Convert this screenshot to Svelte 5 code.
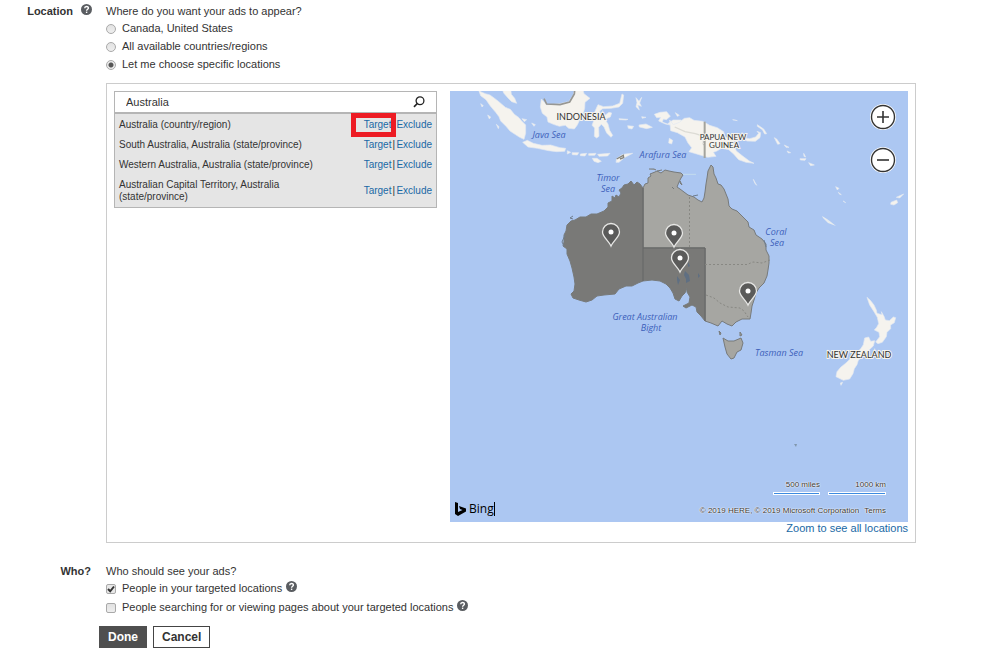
<script>
  let choice = $state('specific');
  let query = $state('Australia');
  let inLocations = $state(true);
  let searching = $state(false);

  const scopes = [
    { id: 'north-america', label: 'Canada, United States' },
    { id: 'all', label: 'All available countries/regions' },
    { id: 'specific', label: 'Let me choose specific locations' }
  ];

  const results = [
    { name: 'Australia (country/region)', marked: true },
    { name: 'South Australia, Australia (state/province)' },
    { name: 'Western Australia, Australia (state/province)' },
    { name: 'Australian Capital Territory, Australia (state/province)' }
  ];

  const pins = [
    [611, 246],
    [674, 247],
    [680, 272],
    [748, 305]
  ];

  const seas = [
    { x: 549, y: 138, text: 'Java Sea' },
    { x: 663, y: 158, text: 'Arafura Sea' },
    { x: 608, y: 181, text: 'Timor' },
    { x: 608, y: 192, text: 'Sea' },
    { x: 776, y: 235, text: 'Coral' },
    { x: 777, y: 246, text: 'Sea' },
    { x: 645, y: 320, text: 'Great Australian' },
    { x: 651, y: 331, text: 'Bight' },
    { x: 779, y: 356, text: 'Tasman Sea' }
  ];
</script>

{#snippet help()}
  <button class="help" type="button" aria-label="Help">
    <svg viewBox="0 0 11 11" width="11" height="11" aria-hidden="true">
      <circle cx="5.5" cy="5.5" r="5.5" fill="#5a5d61" />
      <path d="M3.7 4.3C3.7 1.9 7.4 1.9 7.4 4.1C7.4 5.3 5.6 5.3 5.6 6.8" fill="none" stroke="#fff" stroke-width="1.4" />
      <rect x="4.9" y="7.6" width="1.4" height="1.4" fill="#fff" />
    </svg>
  </button>
{/snippet}

<main>
  <section class="field">
    <div class="name"><h2>Location</h2>{@render help()}</div>
    <div class="body">
      <fieldset>
        <legend>Where do you want your ads to appear?</legend>
        {#each scopes as s}
          <label class="option">
            <input type="radio" name="scope" value={s.id} bind:group={choice} />
            <span>{s.label}</span>
          </label>
        {/each}
      </fieldset>

      <div class="panel">
        <div class="finder">
          <div class="search">
            <input type="text" aria-label="Search locations" bind:value={query} />
            <button type="button" aria-label="Search">
              <svg viewBox="0 0 12 12" width="12" height="12" aria-hidden="true">
                <circle cx="7" cy="4.700" r="3.900" fill="none" stroke="#222" stroke-width="1.3" />
                <path d="M4.3 7.5L1 10.800" stroke="#222" stroke-width="1.7" />
              </svg>
            </button>
          </div>
          <ul>
            {#each results as r}
              <li>
                <span class="place">{r.name}</span>
                <span class="actions">
                  <a href="#target" class:marked={r.marked}>Target</a><i>|</i><a href="#exclude">Exclude</a>
                </span>
              </li>
            {/each}
          </ul>
        </div>

        <div class="mapcol">
          <div class="map">
            <svg class="chart" viewBox="450 91 458 431" role="img" aria-label="Map of Australia">
              <rect x="450" y="91" width="458" height="431" fill="#acc7f2" />

              <!-- Indonesia -->
              <g transform="translate(450 85) scale(.33333)" fill="#f5f3ee" stroke="#e3e9f2" stroke-width="2">
                <path d="M84 10L92 20L106 26L120 30L139 44L150 53L166 67L181 73L193 88L207 98L215 108L227 120L227 145L222 163L209 157L195 148L180 138L168 124L152 108L147 95L137 82L121 63L108 44L92 32Z" />
                <path d="M156 10L161 24L174 39L185 50L200 55L194 40L184 28L182 10Z" />
                <path d="M274 42L282 50L290 60L330 56L356 50L370 30L374 10H398L402 26L420 40L405 52L404 70L399 88L390 103L382 120L373 132L356 130L346 121L328 124L310 118L294 111L291 96L277 85L271 66Z" />
                <path d="M218 172L232 166L250 175L276 181L302 180L330 188L347 190L344 199L320 200L296 197L262 190L234 186Z" />
                <path d="M352 197L362 202L352 207ZM366 203L386 203L382 210L367 209ZM391 207L410 205L405 213L391 212ZM416 206L438 205L434 211L416 211ZM443 208L480 205L473 213L447 214ZM427 220L441 220L454 229L444 233L432 229ZM500 221L515 210L526 207L548 205L523 218L507 232L498 232Z" />
                <path d="M439 70L444 59L461 65L488 63L509 55L516 27L521 30L518 55L507 66L483 70L458 71L449 78L452 91L459 95L477 82L485 84L481 96L465 103L474 117L479 136L488 151L483 157L470 144L462 126L454 118L446 127L447 154L440 159L433 154L434 129L426 121L432 105L438 94L433 83Z" />
                <path d="M558 38L567 49L575 37L569 54L574 64L563 60L568 75L558 65L561 53ZM575 95L588 97L577 100ZM507 101L534 103L528 105L508 104ZM533 122L551 124L546 132L535 130ZM567 120L588 117L607 127L590 131L568 126Z" />
                <path d="M613 88L630 82L650 80L661 94L649 104L640 102L637 111L652 117L669 105L694 105V145L668 130L665 121L646 117L626 108L632 97L620 98ZM658 160L668 166L665 177L656 174Z" />
                <path d="M92 56L100 62L96 66ZM113 90L122 96L118 102ZM139 118L147 125L145 131ZM216 101L230 104L223 110ZM245 114L256 119L252 124Z" />
                <path d="M282 41L290 57L330 59L359 51L373 27L374 17" fill="none" stroke="#979793" stroke-width="5" />
                <path d="M500 222L520 211L521 218L510 222" fill="none" stroke="#85857f" stroke-width="4" />
              </g>

              <!-- New Guinea and the Pacific islands -->
              <g transform="translate(670 85) scale(.33333)" fill="#f5f3ee" stroke="#e3e9f2" stroke-width="2">
                <path d="M-1 105L10 119L28 112L43 100L59 98L72 106L98 109L119 121L142 128L161 140L164 155L189 166L190 178L199 198L219 214L238 228L252 235L228 232L206 224L190 206L176 194L155 190L139 199L130 202L138 214L113 217L80 207L57 200L65 188L54 174L45 156L22 143L2 137Z" />
                <path d="M223 159L239 161L257 156L266 145L261 139L272 143L270 158L256 169L230 168ZM262 119L281 132L290 146L284 147L277 134L262 124Z" />
                <path d="M313 158L320 162L330 176L323 178ZM343 180L357 187L348 187ZM351 198L362 203L355 204ZM390 221L408 221L405 226L391 225ZM416 233L433 240L422 242ZM401 205L407 216L402 214ZM497 305L507 310L502 315ZM505 322L514 329L509 328ZM519 348L527 353ZM663 352L680 345L683 353L672 360L662 358ZM679 337L701 327L689 339ZM188 104L202 107ZM16 83L28 91L22 94ZM250 283L260 301L254 294Z" />
                <path d="M104 110V219" stroke="#a3a39d" stroke-width="6" />
                <path d="M14 126L45 140L76 146L98 153" fill="none" stroke="#dcdbd5" stroke-width="4" />
                <path d="M100 159V174M98 176L103 182" fill="none" stroke="#aaa" stroke-width="2" />
                <path d="M36 268H78" stroke="#c3dced" stroke-width="3" />
              </g>
              <path d="M822 216l5 3 4 3 5 4-8-3-5-5z" fill="#e7ecef" />
              <path d="M794 444h3l-1 3z" fill="#8196ac" />

              <!-- New Zealand -->
              <g transform="translate(780 280) scale(.33333)" fill="#f5f3ee" stroke="#e3e9f2" stroke-width="2">
                <path d="M261 52L271 61L282 75L289 90L291 100L306 104L304 95L312 109L316 120L328 122L340 111L347 113L343 128L332 135L332 146L321 157L319 170L307 187L294 191L287 186L299 170L297 157L283 150L290 142L296 131L292 112L282 95L269 75Z" />
                <path d="M254 174L266 171L272 184L284 182L280 198L268 209L253 225L235 241L231 254L223 266L219 281L209 297L190 301L168 290L171 275L182 262L198 249L210 237L225 224L243 205L250 194Z" />
                <path d="M181 309L188 307L183 316Z" />
              </g>

              <!-- Australian states -->
              <g stroke="#777a7b" stroke-width="1" stroke-linejoin="round">
                <path fill="#a6a6a2" d="M643 188L645 184L648 183L648 178L651 176L650 174L655 172L657 171L661 173L665 170L669 171L674 172L681 173L683 175L681 178L679 182L677 187L680 189L684 192L688 195L694 197L698 200L702 202L704 198L705 192L706 184L707 178L708 171L711 165L713 167L714 174L716 178L718 184L721 185L724 189L726 194L728 199L729 206L732 209L737 211L740 214L744 218L748 222L749 227L754 230L756 235L762 239L766 244L766 250L769 256L769 263L768 270L767 276L764 283L759 288L756 293L754 300L752 306L751 313L750 319L742 319L736 322L732 326L727 324L722 321L718 326L711 323L705 321V248H643Z" />
                <path fill="#797977" d="M643 188L640 184L637 182L634 185L631 181L628 184L624 185L622 188L619 190L621 193L619 197L616 195L615 198L612 196L612 201L608 203L608 207L604 211L597 214L591 214L586 217L580 217L575 220L571 221L567 225L566 231L564 235L564 242L563 246L567 249L567 254L570 261L572 268L574 277L575 284L574 291L571 294L573 298L579 300L586 302L592 300L597 296L604 295L615 294L619 289L626 286L632 286L638 283L643 281Z" />
                <path fill="#797977" d="M643 248H705V321L701 316L697 312L696 307L692 305L686 308L683 306L689 303L690 297L687 292L687 288L685 293L682 296L679 301L675 299L673 293L670 288L666 284L660 281L652 280L643 281Z" />
                <path fill="#a6a6a2" d="M723 338L728 341L734 341L741 338L743 343L741 350L737 352L734 358L731 359L727 354L725 347Z" />
                <path fill="#a6a6a2" d="M719 331l2 2-1 2zM740 332l2 3-2 1zM680 181l2 4-2-2zM657 171l5-1M649 169l5 0 2 1M672 187l2 2" />
              </g>
              <path d="M643 188V281M643 248H705V321" fill="none" stroke="#666664" />
              <g fill="none" stroke="#888883" stroke-dasharray="2 2">
                <path d="M689.5 197V248M705 264.500H747L753 262L762 263L770 260M706 295L714 298L720 303L728 307L740 308L744 311L748 317" />
              </g>
              <g fill="#5f6f82">
                <path d="M677 276l3 4-2 5-1-5zM685 271l4 4 1 6-4 2 0-4-2-4zM688 262l2 4-2 1zM698 273l2 3-2 2z" />
                <path d="M565 235l-3 7 2 4M573 219l-3-1 3-2M693 196l5-1M764 240l2 7" stroke="#6f7d8d" fill="none" />
              </g>

              <g class="country">
                <text x="581" y="120">INDONESIA</text>
                <text x="723" y="140" class="narrow">PAPUA NEW</text>
                <text x="724" y="148" class="narrow">GUINEA</text>
                <text x="859" y="358">NEW ZEALAND</text>
              </g>
              <g class="sea">
                {#each seas as s}<text x={s.x} y={s.y}>{s.text}</text>{/each}
              </g>

              {#each pins as [x, y]}
                <g transform="translate({x} {y})">
                  <path d="M0 0C-2-5-8.500-9-8.500-14A8.500 8.500 0 0 1 8.500-14C8.500-9 2-5 0 0Z" fill="#5b5b5a" stroke="#e8e8e6" stroke-width="1.300" />
                  <circle cy="-14" r="2.500" fill="#fff" />
                </g>
              {/each}
            </svg>

            <div class="zoom">
              <button type="button" aria-label="Zoom in">
                <svg viewBox="0 0 26 26" width="26" height="26" aria-hidden="true">
                  <circle cx="13" cy="13" r="11.500" fill="#fff" stroke="#333" stroke-width="1.400" />
                  <path d="M7 13H19M13 7V19" stroke="#333" stroke-width="1.600" />
                </svg>
              </button>
              <button type="button" aria-label="Zoom out">
                <svg viewBox="0 0 26 26" width="26" height="26" aria-hidden="true">
                  <circle cx="13" cy="13" r="11.500" fill="#fff" stroke="#333" stroke-width="1.400" />
                  <path d="M7 13H19" stroke="#333" stroke-width="1.600" />
                </svg>
              </button>
            </div>

            <div class="bing">
              <svg viewBox="0 0 11 14" width="11" height="14" aria-hidden="true">
                <path d="M0 0L3 1V10L7.500 8L5 7L4 4L11 6.500V9.500L3 14L0 12Z" fill="#000" />
              </svg>
              <span>Bing</span>
            </div>

            <div class="legal">
              <div class="scales">
                <span class="miles">500 miles</span>
                <span class="km">1000 km</span>
              </div>
              <div class="credits"><span>© 2019 HERE, © 2019 Microsoft Corporation</span><a href="#terms">Terms</a></div>
            </div>
          </div>
          <a class="all" href="#all">Zoom to see all locations</a>
        </div>
      </div>
    </div>
  </section>

  <section class="field who">
    <div class="name"><h2>Who?</h2></div>
    <div class="body">
      <fieldset>
        <legend>Who should see your ads?</legend>
        <div class="line">
          <label class="option"><input type="checkbox" bind:checked={inLocations} /><span>People in your targeted locations</span></label>
          {@render help()}
        </div>
        <div class="line">
          <label class="option"><input type="checkbox" bind:checked={searching} /><span>People searching for or viewing pages about your targeted locations</span></label>
          {@render help()}
        </div>
      </fieldset>
    </div>
  </section>

  <div class="buttons">
    <button type="button" class="done">Done</button>
    <button type="button">Cancel</button>
  </div>
</main>

<style>
  :global(body) {
    margin: 0;
    background: #fff;
  }
  main {
    padding: 2px 90px 9px 0;
    font: 11px/18px "Liberation Sans", Arial, sans-serif;
    color: #333;
  }
  button, input {
    font: inherit;
    color: inherit;
  }
  a {
    color: #1a69a6;
    text-decoration: none;
  }
  .field {
    display: grid;
    grid-template-columns: 92px minmax(0, 1fr);
    column-gap: 14px;
  }
  .name {
    display: flex;
    justify-content: flex-end;
    align-items: flex-start;
    gap: 8px;
  }
  h2 {
    margin: 0;
    font-size: 11px;
    font-weight: bold;
  }
  .help {
    display: block;
    padding: 0;
    border: 0;
    background: none;
  }
  .help svg {
    display: block;
  }
  .name .help {
    margin-top: 2px;
  }
  .who h2 {
    padding-right: 1px;
  }
  fieldset {
    margin: 0;
    padding: 0;
    border: 0;
    min-width: 0;
  }
  legend {
    padding: 0;
    height: 17px;
  }
  .option {
    display: flex;
    align-items: center;
    gap: 6px;
    height: 18px;
  }
  .line {
    display: flex;
    gap: 4px;
    height: 19px;
  }
  .line .help {
    align-self: flex-start;
    margin-top: 2px;
  }
  .option input {
    appearance: none;
    flex: none;
    margin: 1px 0 0;
    width: 10px;
    height: 10px;
    border: 1px solid #a9a9a9;
    border-radius: 2px;
    background: linear-gradient(#e2e2e2, #eee);
  }
  .option input[type="radio"] {
    border-radius: 50%;
  }
  .option input[type="radio"]:checked {
    background: radial-gradient(circle, #555 0 2px, #eaeaea 3px);
  }
  .option input[type="checkbox"]:checked {
    background: #e8e8e8 url("data:image/svg+xml,%3Csvg xmlns='http://www.w3.org/2000/svg' viewBox='0 0 8 8'%3E%3Cpath d='M1 4L3.200 6.300L7 1.500' fill='none' stroke='%23333' stroke-width='2'/%3E%3C/svg%3E") center / 8px 8px no-repeat;
  }
  .panel {
    display: flex;
    align-items: flex-start;
    gap: 13px;
    margin-top: 10px;
    padding: 7px;
    border: 1px solid #ccc;
  }
  .finder {
    flex: 323 1 0;
    min-width: 0;
  }
  .search {
    display: flex;
    align-items: center;
    height: 20px;
    padding: 0 11px;
    border: 1px solid #b5b5b5;
    border-bottom-width: 2px;
  }
  .search input {
    flex: 1;
    min-width: 0;
    padding: 0;
    border: 0;
    outline: 0;
    background: none;
  }
  .search button {
    padding: 0;
    border: 0;
    background: none;
  }
  .search svg {
    display: block;
  }
  ul {
    margin: 0;
    padding: 1px 4px 0;
    list-style: none;
    border: 1px solid #b5b5b5;
    border-top: 0;
    background: #e5e5e5;
    font-size: 10px;
    line-height: 12px;
  }
  li {
    display: flex;
    align-items: center;
    justify-content: space-between;
    padding: 4px 0;
  }
  .place {
    max-width: 210px;
  }
  .actions {
    display: flex;
  }
  .actions i {
    font-style: normal;
    width: 5px;
    text-align: center;
  }
  .actions a {
    position: relative;
  }
  .marked::after {
    content: "";
    position: absolute;
    inset: -6px -5px -6px -13px;
    border: 5px solid #ed1c24;
  }
  .mapcol {
    flex: 458 1 0;
    min-width: 0;
    text-align: right;
  }
  .map {
    position: relative;
    text-align: left;
  }
  .chart {
    display: block;
    width: 100%;
    height: auto;
  }
  .country {
    font: 9px Lato, sans-serif;
    text-anchor: middle;
    fill: #333;
    stroke: #f5f3ee;
    stroke-width: 2px;
    paint-order: stroke;
  }
  .narrow {
    font-size: 8px;
  }
  .sea {
    font: italic 9px "Open Sans", sans-serif;
    text-anchor: middle;
    fill: #3c5fba;
  }
  .zoom {
    position: absolute;
    top: 13px;
    right: 12px;
    display: grid;
    gap: 17px;
  }
  .zoom button {
    padding: 0;
    border: 0;
    border-radius: 50%;
    background: #fff;
  }
  .zoom svg {
    display: block;
  }
  .bing {
    position: absolute;
    left: 5px;
    bottom: 6px;
    display: flex;
    align-items: center;
    gap: 3px;
    font: 12px/16px "Open Sans", sans-serif;
    color: #000;
  }
  .bing span {
    border-right: 1px solid #000;
    line-height: 14px;
  }
  .legal {
    position: absolute;
    right: 22px;
    bottom: 5px;
    font-size: 8px;
    line-height: 12px;
    text-shadow: 0 0 1px #fff, 0 0 1px #fff, 0 0 2px #fff;
  }
  .scales {
    display: flex;
    justify-content: flex-end;
    gap: 8px;
    text-align: right;
    margin-bottom: 10px;
  }
  .scales span::after {
    content: "";
    display: block;
    height: 1px;
    margin-top: 1px;
    border: 1px solid #fff;
    background: #3c8ae0;
  }
  .miles {
    width: 47px;
  }
  .km {
    width: 58px;
  }
  .credits {
    display: flex;
    gap: 5px;
  }
  .credits a {
    color: inherit;
  }
  .all {
    display: block;
    line-height: 13px;
  }
  .who {
    margin-top: 19px;
  }
  .buttons {
    display: flex;
    gap: 6px;
    padding-left: 99px;
    margin-top: 9px;
  }
  .buttons button {
    height: 22px;
    padding: 0 8px;
    border: 1px solid #444;
    background: #fff;
    font-size: 12px;
    font-weight: bold;
    line-height: 20px;
  }
  .buttons .done {
    border-color: #4f4f4f;
    background: #4f4f4f;
    color: #fff;
  }
</style>
